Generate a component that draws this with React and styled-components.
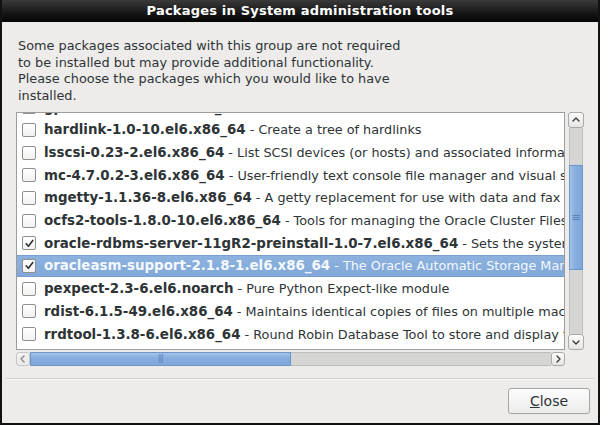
import React from 'react';
import styled, { createGlobalStyle } from 'styled-components';

const GlobalStyle = createGlobalStyle`
  html, body {
    margin: 0;
    padding: 0;
    background: #ffffff;
  }
  body {
    font-family: "DejaVu Sans", "Liberation Sans", sans-serif;
  }
`;

const PACKAGES = [
  { key: 'gpm', name: 'gpm-1.20.6-12.el6.x86_64', desc: 'A mouse server for the Linux console' },
  { key: 'hardlink', name: 'hardlink-1.0-10.el6.x86_64', desc: 'Create a tree of hardlinks' },
  { key: 'lsscsi', name: 'lsscsi-0.23-2.el6.x86_64', desc: 'List SCSI devices (or hosts) and associated information' },
  { key: 'mc', name: 'mc-4.7.0.2-3.el6.x86_64', desc: 'User-friendly text console file manager and visual shell' },
  { key: 'mgetty', name: 'mgetty-1.1.36-8.el6.x86_64', desc: 'A getty replacement for use with data and fax modems' },
  { key: 'ocfs2', name: 'ocfs2-tools-1.8.0-10.el6.x86_64', desc: 'Tools for managing the Oracle Cluster Filesystem' },
  { key: 'rdbms', name: 'oracle-rdbms-server-11gR2-preinstall-1.0-7.el6.x86_64', desc: 'Sets the system for Oracle single instance and Real Application Cluster install', checked: true },
  { key: 'asm', name: 'oracleasm-support-2.1.8-1.el6.x86_64', desc: 'The Oracle Automatic Storage Management support programs', checked: true, selected: true },
  { key: 'pexpect', name: 'pexpect-2.3-6.el6.noarch', desc: 'Pure Python Expect-like module' },
  { key: 'rdist', name: 'rdist-6.1.5-49.el6.x86_64', desc: 'Maintains identical copies of files on multiple machines' },
  { key: 'rrdtool', name: 'rrdtool-1.3.8-6.el6.x86_64', desc: 'Round Robin Database Tool to store and display time-series data' },
];

function Chevron({ dir }) {
  const paths = {
    up: 'M2 6 L5 3 L8 6',
    down: 'M2 4 L5 7 L8 4',
    left: 'M6 2 L3 5 L6 8',
    right: 'M4 2 L7 5 L4 8',
  };
  return (
    <svg width="10" height="10" viewBox="0 0 10 10">
      <path d={paths[dir]} fill="none" stroke="#3a3a3a" strokeWidth="1.4" strokeLinecap="round" strokeLinejoin="round" />
    </svg>
  );
}

function CheckMark() {
  return (
    <svg width="11" height="11" viewBox="0 0 11 11">
      <path d="M2.2 5.8 L4.4 8.2 L8.8 2.4" fill="none" stroke="#2e3436" strokeWidth="1.6" strokeLinecap="round" strokeLinejoin="round" />
    </svg>
  );
}

export default function App() {
  return (
    <>
      <GlobalStyle />
      <Window>
        <TitleBar>Packages in System administration tools</TitleBar>
        <Body>
          <Intro>
            Some packages associated with this group are not required<br />
            to be installed but may provide additional functionality.<br />
            Please choose the packages which you would like to have<br />
            installed.
          </Intro>
          <ListArea>
            <ListBox>
              <Rows>
                {PACKAGES.map(({ key, name, desc, checked, selected }) => (
                  <Row key={key} selected={selected}>
                    <Checkbox>{checked && <CheckMark />}</Checkbox>
                    <RowText selected={selected}>
                      <b>{name}</b> - {desc}
                    </RowText>
                  </Row>
                ))}
              </Rows>
            </ListBox>
            <VScroll>
              <ArrowButton><Chevron dir="up" /></ArrowButton>
              <VTrough>
                <VThumb>
                  <Grip vertical>≡</Grip>
                </VThumb>
              </VTrough>
              <ArrowButton><Chevron dir="down" /></ArrowButton>
            </VScroll>
            <HScroll>
              <ArrowButton faded><Chevron dir="left" /></ArrowButton>
              <HTrough>
                <HThumb>
                  <Grip>|||</Grip>
                </HThumb>
              </HTrough>
              <ArrowButton><Chevron dir="right" /></ArrowButton>
            </HScroll>
          </ListArea>
          <Separator />
          <ButtonRow>
            <CloseButton><u>C</u>lose</CloseButton>
          </ButtonRow>
        </Body>
      </Window>
    </>
  );
}

const Window = styled.div`
  width: 600px;
  height: 425px;
  box-sizing: border-box;
  border: 2px solid #111;
  border-top: none;
  background: #edeceb;
  display: flex;
  flex-direction: column;
  overflow: hidden;
`;

const TitleBar = styled.div`
  height: 22px;
  margin: 0 -2px;
  flex-shrink: 0;
  background: linear-gradient(#3a3a3a, #161616 60%, #050505);
  color: #ffffff;
  font-weight: bold;
  font-size: 13px;
  line-height: 22px;
  text-align: center;
  letter-spacing: 0.2px;
`;

const Body = styled.div`
  flex: 1;
  display: flex;
  flex-direction: column;
  padding: 0 14px 0 14px;
`;

const Intro = styled.div`
  margin-top: 16px;
  padding-left: 2px;
  font-size: 12.85px;
  line-height: 16.7px;
  color: #2e3436;
`;

const ListArea = styled.div`
  margin-top: 7px;
  display: grid;
  grid-template-columns: 1fr 16px;
  grid-template-rows: 238px 14px;
  column-gap: 3px;
  row-gap: 2px;
`;

const ListBox = styled.div`
  background: #ffffff;
  border: 1px solid #9c9c9a;
  overflow: hidden;
`;

const Rows = styled.div`
  margin-top: -17px;
`;

const Row = styled.div`
  height: 22.7px;
  box-sizing: border-box;
  display: flex;
  align-items: center;
  padding-left: 5px;
  background: ${({ selected }) => (selected ? 'linear-gradient(#8db2de, #80a8d8)' : 'transparent')};
  border-top: 1px solid ${({ selected }) => (selected ? '#7a9fd0' : 'transparent')};
  border-bottom: 1px solid ${({ selected }) => (selected ? '#7a9fd0' : 'transparent')};
`;

const Checkbox = styled.span`
  width: 12px;
  height: 12px;
  flex-shrink: 0;
  border: 1px solid #8f8f8d;
  border-radius: 2px;
  background: linear-gradient(#ffffff, #f1f1f0);
  display: flex;
  align-items: center;
  justify-content: center;
  margin-right: 8px;
`;

const RowText = styled.span`
  white-space: nowrap;
  font-size: 12.8px;
  color: ${({ selected }) => (selected ? '#f4f8fd' : '#2e3436')};
  b {
    font-weight: bold;
    font-size: 13.4px;
  }
`;

const ArrowButton = styled.div`
  flex-shrink: 0;
  width: 14px;
  height: 14px;
  box-sizing: border-box;
  border: 1px solid #a9a9a7;
  border-radius: 3px;
  background: linear-gradient(#fbfbfb, #e6e6e5);
  display: flex;
  align-items: center;
  justify-content: center;
  opacity: ${({ faded }) => (faded ? 0.55 : 1)};
`;

const VScroll = styled.div`
  display: flex;
  flex-direction: column;
  align-items: center;
  width: 16px;
  ${ArrowButton} {
    width: 16px;
    height: 16px;
  }
`;

const VTrough = styled.div`
  flex: 1;
  width: 14px;
  background: #d5d5d4;
  border-left: 1px solid #bdbdbc;
  border-right: 1px solid #bdbdbc;
  box-sizing: border-box;
  padding-top: 37px;
`;

const VThumb = styled.div`
  height: 105px;
  margin: 0 -1px;
  box-sizing: border-box;
  border: 1px solid #6f96cb;
  background: linear-gradient(90deg, #a5c3e8, #86aedf 40%, #7ea7da);
  display: flex;
  align-items: center;
  justify-content: center;
`;

const Grip = styled.span`
  color: #5d82b8;
  font-size: ${({ vertical }) => (vertical ? '11px' : '8px')};
  line-height: 1;
  letter-spacing: ${({ vertical }) => (vertical ? '0' : '-1px')};
`;

const HScroll = styled.div`
  display: flex;
  align-items: center;
`;

const HTrough = styled.div`
  flex: 1;
  height: 14px;
  box-sizing: border-box;
  background: #d5d5d4;
  border-top: 1px solid #bdbdbc;
  border-bottom: 1px solid #bdbdbc;
`;

const HThumb = styled.div`
  width: 50%;
  height: 14px;
  margin-top: -1px;
  box-sizing: border-box;
  border: 1px solid #6f96cb;
  background: linear-gradient(#a5c3e8, #86aedf 40%, #7ea7da);
  display: flex;
  align-items: center;
  justify-content: center;
`;

const Separator = styled.div`
  margin: 12px -10px 0;
  height: 1px;
  background: #cfcecd;
  border-bottom: 1px solid #fbfbfb;
`;

const ButtonRow = styled.div`
  display: flex;
  justify-content: flex-end;
  margin-top: 8px;
  margin-right: -6px;
`;

const CloseButton = styled.button`
  width: 82px;
  height: 26px;
  border: 1px solid #a4a4a2;
  border-radius: 3px;
  background: linear-gradient(#fdfdfd, #ececeb);
  font-family: "DejaVu Sans", "Liberation Sans", sans-serif;
  font-size: 14px;
  color: #2e3436;
  padding: 0;
  u {
    text-decoration: underline;
  }
`;
